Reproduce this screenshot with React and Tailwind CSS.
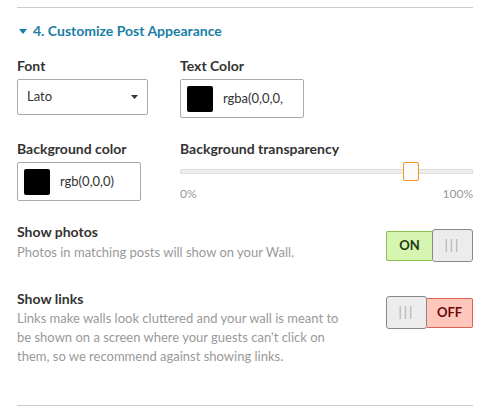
import React from "react";

const Label = ({ children }) => (
  <p className="text-[14px] font-bold leading-5 text-[#333]">{children}</p>
);

const ColorInput = ({ value, width }) => (
  <div
    className={`mt-[3px] flex h-[39px] items-center rounded-[2px] border border-[#aaa] bg-white pl-[6px] ${width}`}
  >
    <span className="h-[26px] w-[26px] rounded-[2px] bg-black" />
    <span className="ml-[10px] text-[13px] text-[#333]">{value}</span>
  </div>
);

const Grip = () => (
  <span className="text-[13px] tracking-[2px] text-[#aaa]">|||</span>
);

const OnToggle = () => (
  <div className="flex items-center">
    <div className="flex h-[30px] w-[46px] items-center justify-center rounded-l-[2px] border border-r-0 border-[#8cc152] bg-[#d5f5b0] text-[13px] font-bold text-[#1e3a0f]">
      ON
    </div>
    <div className="flex h-[33px] w-[41px] items-center justify-center rounded-[3px] border border-[#888] bg-[#ececec]">
      <Grip />
    </div>
  </div>
);

const OffToggle = () => (
  <div className="flex items-center">
    <div className="flex h-[33px] w-[41px] items-center justify-center rounded-[3px] border border-[#888] bg-[#ececec]">
      <Grip />
    </div>
    <div className="flex h-[30px] w-[46px] items-center justify-center rounded-r-[2px] border border-l-0 border-[#d9654f] bg-[#ffc6bb] text-[13px] font-bold text-[#6b0a0a]">
      OFF
    </div>
  </div>
);

export default function App() {
  return (
    <div
      className="h-[415px] w-[496px] bg-white pl-[17px] pr-[23px] pt-[7px]"
      style={{ fontFamily: "Lato, 'Noto Sans', sans-serif" }}
    >
      <div className="border-t border-[#ccc]" />

      <div className="mt-[13px] flex items-center leading-5">
        <svg width="8" height="5" viewBox="0 0 8 5" className="ml-[2px] mr-[6px]">
          <path d="M0 0h8L4 5z" fill="#1a7ea6" />
        </svg>
        <h2 className="text-[14px] font-bold text-[#1a7ea6]">
          4. Customize Post Appearance
        </h2>
      </div>

      <div className="mt-[15px] grid grid-cols-[163px_1fr]">
        <div>
          <Label>Font</Label>
          <div className="mt-[3px] flex h-[36px] w-[131px] items-center justify-between rounded-[2px] border border-[#aaa] bg-white pl-[9px] pr-[9px]">
            <span className="text-[13px] text-[#333]">Lato</span>
            <svg width="7" height="4" viewBox="0 0 7 4">
              <path d="M0 0h7L3.5 4z" fill="#333" />
            </svg>
          </div>
        </div>
        <div>
          <Label>Text Color</Label>
          <ColorInput value="rgba(0,0,0," width="w-[124px]" />
        </div>

        <div className="mt-[21px]">
          <Label>Background color</Label>
          <ColorInput value="rgb(0,0,0)" width="w-[124px]" />
        </div>
        <div className="mt-[21px]">
          <Label>Background transparency</Label>
          <div className="relative mt-[10px] h-[5px] rounded-[1px] border border-[#ddd] bg-[#eee]">
            <div className="absolute left-[222px] top-[-8px] h-[19px] w-[16px] rounded-[2px] border border-[#f7941d] bg-[#fafafa]" />
          </div>
          <div className="mt-[12px] flex justify-between text-[12px] leading-4 text-[#999]">
            <span>0%</span>
            <span>100%</span>
          </div>
        </div>
      </div>

      <div className="mt-[20px] flex items-start justify-between">
        <div>
          <Label>Show photos</Label>
          <p className="text-[13px] leading-5 text-[#999]">
            Photos in matching posts will show on your Wall.
          </p>
        </div>
        <div className="mt-[7px]">
          <OnToggle />
        </div>
      </div>

      <div className="mt-[27px] flex items-start justify-between">
        <div className="w-[332px]">
          <Label>Show links</Label>
          <p className="text-[13px] leading-[19px] text-[#999]">
            Links make walls look cluttered and your wall is meant to be shown
            on a screen where your guests can't click on them, so we recommend
            against showing links.
          </p>
        </div>
        <div className="mt-[7px]">
          <OffToggle />
        </div>
      </div>

      <div className="mt-[39px] border-t border-[#ccc]" />
    </div>
  );
}
